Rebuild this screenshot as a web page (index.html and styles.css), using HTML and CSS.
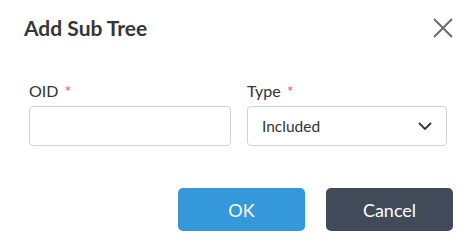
FILE: index.html
```html
<!DOCTYPE html>
<html>
<head>
<meta charset="utf-8">
<link rel="stylesheet" href="styles.css">
</head>
<body>
<div class="dialog">
  <div class="header">
    <h1 class="title">Add Sub Tree</h1>
    <button class="close" aria-label="Close">
      <svg width="20" height="20" viewBox="0 0 20 20"><path d="M1 1L19 19M19 1L1 19" stroke="#6b6b6b" stroke-width="2" fill="none"/></svg>
    </button>
  </div>
  <div class="form">
    <div class="field">
      <label class="label">OID <span class="req">*</span></label>
      <input class="input" type="text">
    </div>
    <div class="field">
      <label class="label">Type <span class="req">*</span></label>
      <div class="select">
        <span>Included</span>
        <svg width="14" height="8" viewBox="0 0 14 8"><path d="M1 1L7 7L13 1" stroke="#333" stroke-width="1.8" fill="none"/></svg>
      </div>
    </div>
  </div>
  <div class="footer">
    <button class="btn ok">OK</button>
    <button class="btn cancel">Cancel</button>
  </div>
</div>
</body>
</html>
```
FILE: styles.css
```css
html, body {
  margin: 0;
  padding: 0;
  background: #fff;
}
body {
  font-family: Lato, "Open Sans", sans-serif;
  color: #333;
}
.dialog {
  width: 474px;
  height: 244px;
  box-sizing: border-box;
}
.header {
  display: flex;
  align-items: center;
  justify-content: space-between;
  padding: 13px 21px 0 24px;
  height: 30px;
}
.title {
  margin: 0;
  font-size: 21px;
  font-weight: 700;
  color: #363636;
  line-height: 30px;
}
.close {
  border: 0;
  background: none;
  padding: 0;
  width: 20px;
  height: 20px;
  display: block;
}
.close svg { display: block; }
.form {
  display: grid;
  grid-template-columns: 202px 200px;
  column-gap: 16px;
  padding: 38px 0 0 29px;
}
.field {
  display: flex;
  flex-direction: column;
}
.label {
  font-size: 16px;
  line-height: 20px;
  color: #333;
  margin-bottom: 5px;
}
.req {
  color: #e05a6a;
  margin-left: 2px;
}
.input, .select {
  box-sizing: border-box;
  height: 40px;
  border: 1px solid #d2d2d2;
  border-radius: 4px;
  background: #fff;
  margin: 0;
  font-family: inherit;
}
.select {
  display: flex;
  align-items: center;
  justify-content: space-between;
  padding: 0 14px 0 14px;
  font-size: 15.5px;
  color: #333;
}
.select svg { display: block; }
.footer {
  display: flex;
  justify-content: flex-end;
  gap: 21px;
  padding: 42px 21px 0 0;
}
.btn {
  width: 127px;
  height: 43px;
  border: 0;
  border-radius: 5px;
  font-family: inherit;
  font-size: 18px;
  color: #fff;
}
.ok { background: #3498db; }
.cancel { background: #404a58; }
```
